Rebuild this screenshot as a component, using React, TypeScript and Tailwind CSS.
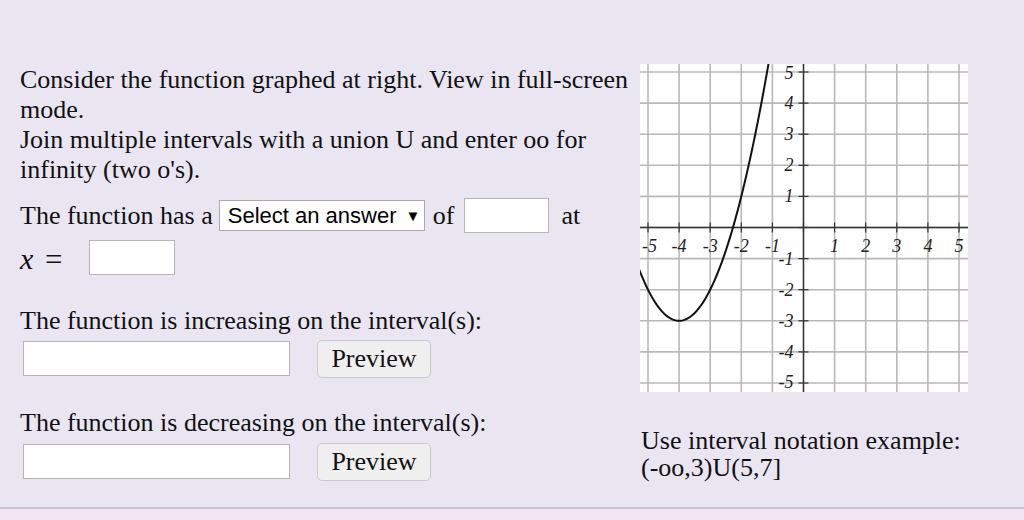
import React from "react";

const S = 31.1;
const O = 8;
const AX = O + 5 * S;

function Graph() {
  const grid: React.ReactNode[] = [];
  for (let i = 0; i <= 10; i++) {
    const p = O + i * S;
    grid.push(<line key={"v" + i} x1={p} y1={0} x2={p} y2={328} stroke="#b8b8b8" strokeWidth={1.6} />);
    grid.push(<line key={"h" + i} x1={0} y1={p} x2={328} y2={p} stroke="#b8b8b8" strokeWidth={1.6} />);
  }
  const ticks: React.ReactNode[] = [];
  const labels: React.ReactNode[] = [];
  for (let i = 0; i <= 10; i++) {
    const v = i - 5;
    const p = O + i * S;
    ticks.push(<line key={"tx" + i} x1={p} y1={AX - 5} x2={p} y2={AX + 5} stroke="#333" strokeWidth={1.2} />);
    ticks.push(<line key={"ty" + i} x1={AX - 5} y1={p} x2={AX + 5} y2={p} stroke="#333" strokeWidth={1.2} />);
    if (v !== 0) {
      labels.push(
        <text key={"lx" + i} x={i === 0 ? p + 1.5 : p} y={AX + 24} textAnchor="middle" fontSize={18} fontStyle="italic" fontFamily="'Liberation Serif', serif" fill="#222">
          {v}
        </text>
      );
      const yv = -v;
      labels.push(
        <text key={"ly" + i} x={AX - 10} y={i === 0 ? p + 7 : i === 10 ? p + 5 : p + 6} textAnchor="end" fontSize={18} fontStyle="italic" fontFamily="'Liberation Serif', serif" fill="#222">
          {yv}
        </text>
      );
    }
  }
  const pts: string[] = [];
  for (let k = 0; k <= 80; k++) {
    const x = -5.3 + (k / 80) * (5.3 - 1.1);
    const y = (x + 4) * (x + 4) - 3;
    pts.push(`${(AX + x * S).toFixed(2)},${(AX - y * S).toFixed(2)}`);
  }
  return (
    <svg width={328} height={328} viewBox="0 0 328 328" className="block bg-white">
      <defs>
        <clipPath id="c">
          <rect x={0} y={0} width={328} height={328} />
        </clipPath>
      </defs>
      {grid}
      <line x1={0} y1={AX} x2={328} y2={AX} stroke="#333" strokeWidth={1.4} />
      <line x1={AX} y1={0} x2={AX} y2={328} stroke="#333" strokeWidth={1.4} />
      {ticks}
      {labels}
      <polyline clipPath="url(#c)" points={pts.join(" ")} fill="none" stroke="#111" strokeWidth={2} />
    </svg>
  );
}

function TextInput({ w }: { w: string }) {
  return <input type="text" className={`${w} h-[35px] bg-white border border-[#b5b5b5] outline-none`} />;
}

function PreviewButton() {
  return (
    <button className="h-[38px] w-[114px] rounded-[5px] border border-[#c9c9c9] bg-[#efefef] text-[26px] leading-[30px] text-[#111] font-['Liberation_Serif',serif]">
      Preview
    </button>
  );
}

export default function App() {
  return (
    <div className="w-[1024px] h-[520px] bg-[#e9e6f1] flex flex-col font-['Liberation_Serif',serif] text-[#111] text-[26px] overflow-hidden">
      <div className="flex-1 flex pt-[64px]">
        <div className="w-[640px] pl-[20px]">
          <p className="mt-[1px] leading-[30px] whitespace-nowrap">
            Consider the function graphed at right. View in full-screen
            <br />
            mode.
            <br />
            Join multiple intervals with a union U and enter oo for
            <br />
            infinity (two o's).
          </p>
          <div className="mt-[13px] h-[35px] flex items-center whitespace-nowrap leading-[30px]">
            <span>The function has a</span>
            <div className="ml-[6px] h-[31px] w-[206px] bg-white border border-[#a9a9a9] flex items-center pl-[8px] font-['Liberation_Sans',sans-serif] text-[22px] text-black">
              Select an answer <span className="ml-[9px] text-[15px]">▼</span>
            </div>
            <span className="ml-[8px]">of</span>
            <div className="ml-[10px]">
              <TextInput w="w-[85px]" />
            </div>
            <span className="ml-[12px]">at</span>
          </div>
          <div className="mt-[7px] h-[35px] flex items-center leading-[30px]">
            <span className="italic w-[25px] text-[30px] font-['Liberation_Serif',serif] pt-[2px]">x</span>
            <span className="w-[44px] text-[31px] font-['Liberation_Serif',serif] pt-[4px]">=</span>
            <div>
              <TextInput w="w-[86px]" />
            </div>
          </div>
          <p className="mt-[31px] leading-[30px]">The function is increasing on the interval(s):</p>
          <div className="mt-[3px] h-[38px] flex items-center">
            <div className="ml-[3px]">
              <TextInput w="w-[267px]" />
            </div>
            <div className="ml-[27px]">
              <PreviewButton />
            </div>
          </div>
          <p className="mt-[31px] leading-[30px]">The function is decreasing on the interval(s):</p>
          <div className="mt-[4px] h-[38px] flex items-center">
            <div className="ml-[3px]">
              <TextInput w="w-[267px]" />
            </div>
            <div className="ml-[27px]">
              <PreviewButton />
            </div>
          </div>
        </div>
        <div className="w-[328px]">
          <Graph />
          <p className="mt-[35px] leading-[27px] ml-[1px] whitespace-nowrap">
            Use interval notation example:
            <br />
            (-oo,3)U(5,7]
          </p>
        </div>
      </div>
      <div className="h-[13px] border-t-2 border-[#c3bfdc] bg-[#f3e6f0]" />
    </div>
  );
}
